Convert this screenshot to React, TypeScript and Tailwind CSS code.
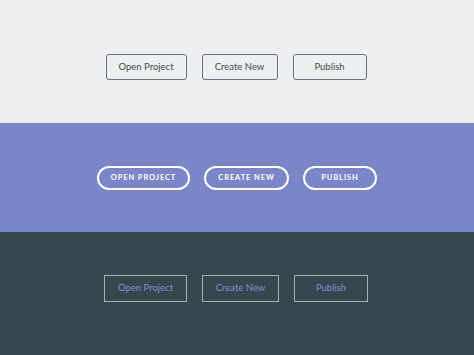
const labels = ['Open Project', 'Create New', 'Publish']

const font = { fontFamily: 'Lato, "Open Sans", sans-serif' }

export default function App() {
  return (
    <div className="flex h-[355px] w-[474px] flex-col" style={font}>
      <section className="flex h-[123px] items-center justify-center gap-[15px] bg-[#eeeff1] pt-[11px] pr-[2px]">
        <button className="h-[26px] w-[81px] rounded-[3px] border border-[#6b7075] text-[9.5px] text-[#454a4f]">
          {labels[0]}
        </button>
        <button className="h-[26px] w-[76px] rounded-[3px] border border-[#6b7075] text-[9.5px] text-[#454a4f]">
          {labels[1]}
        </button>
        <button className="h-[26px] w-[74px] rounded-[3px] border border-[#6b7075] text-[9.5px] text-[#454a4f]">
          {labels[2]}
        </button>
      </section>

      <section className="flex h-[109px] items-center justify-center gap-[14px] bg-[#7a86c8]">
        <button className="h-[24px] w-[93px] rounded-full border-2 border-white text-[7.5px] font-bold uppercase tracking-[0.12em] text-white">
          {labels[0]}
        </button>
        <button className="h-[24px] w-[85px] rounded-full border-2 border-white text-[7.5px] font-bold uppercase tracking-[0.12em] text-white">
          {labels[1]}
        </button>
        <button className="h-[24px] w-[74px] rounded-full border-2 border-white text-[7.5px] font-bold uppercase tracking-[0.12em] text-white">
          {labels[2]}
        </button>
      </section>

      <section className="flex h-[123px] items-center justify-center gap-[15px] bg-[#36474d] pr-[2px] pb-[10px]">
        <button className="h-[27px] w-[83px] border border-[#a3b1b4] text-[9.5px] text-[#8290d6]">
          {labels[0]}
        </button>
        <button className="h-[27px] w-[77px] border border-[#a3b1b4] text-[9.5px] text-[#8290d6]">
          {labels[1]}
        </button>
        <button className="h-[27px] w-[74px] border border-[#a3b1b4] text-[9.5px] text-[#8290d6]">
          {labels[2]}
        </button>
      </section>
    </div>
  )
}
